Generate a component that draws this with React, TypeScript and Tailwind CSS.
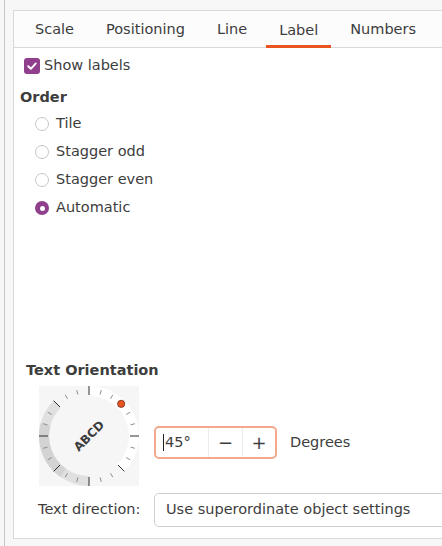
import React from "react";

function Dial() {
  const cx = 50;
  const cy = 50;
  const pt = (deg: number, r: number) => {
    const a = (deg * Math.PI) / 180;
    return [cx + r * Math.cos(a), cy - r * Math.sin(a)];
  };
  const arc = (from: number, to: number, r: number) => {
    const [x1, y1] = pt(from, r);
    const [x2, y2] = pt(to, r);
    const large = to - from > 180 ? 1 : 0;
    return `M ${x1} ${y1} A ${r} ${r} 0 ${large} 0 ${x2} ${y2}`;
  };
  const ticks = [];
  for (let a = 0; a < 360; a += 15) {
    if (a === 45) continue;
    const major = a % 45 === 0;
    const [x1, y1] = pt(a, major ? 41 : 43);
    const [x2, y2] = pt(a, major ? 50 : 47.5);
    ticks.push(
      <line
        key={a}
        x1={x1}
        y1={y1}
        x2={x2}
        y2={y2}
        stroke={major ? "#2e2e2e" : "#8c8c8c"}
        strokeWidth={1}
      />
    );
  }
  const [dx, dy] = pt(45, 45.5);
  return (
    <svg width="100" height="100" viewBox="0 0 100 100" className="block">
      <rect x="0" y="0" width="100" height="100" fill="#f6f6f6" />
      <path d={arc(135, 270, 45)} stroke="#e0e0e0" strokeWidth="10" fill="none" />
      <path d={arc(165, 235, 45)} stroke="#d3d3d3" strokeWidth="10" fill="none" />
      <path d={arc(-45, 90, 45)} stroke="#ffffff" strokeWidth="10" fill="none" />
      {ticks}
      <circle cx={dx} cy={dy} r="3.6" fill="#e95420" stroke="#6a2a14" strokeWidth="0.8" />
      <text
        x={cx}
        y={cy}
        transform={`rotate(-45 ${cx} ${cy})`}
        textAnchor="middle"
        dominantBaseline="central"
        fontSize="12"
        fontWeight="bold"
        fill="#3d3d3d"
        fontFamily="'DejaVu Sans', sans-serif"
      >
        ABCD
      </text>
    </svg>
  );
}

function Radio({ label, checked }: { label: string; checked?: boolean }) {
  return (
    <div className="flex h-[28px] items-center">
      {checked ? (
        <span className="flex h-[14px] w-[14px] items-center justify-center rounded-full bg-[#8f3f8c]">
          <span className="h-[5px] w-[5px] rounded-full bg-white" />
        </span>
      ) : (
        <span className="h-[14px] w-[14px] rounded-full border border-[#c6c6c6] bg-white" />
      )}
      <span className="ml-[7px]">{label}</span>
    </div>
  );
}

export default function App() {
  const tabs = ["Scale", "Positioning", "Line", "Label", "Numbers"];
  return (
    <div
      className="flex h-[546px] w-[442px] overflow-hidden bg-[#f7f7f7] text-[14.5px] text-[#3d3d3d]"
      style={{ fontFamily: "'DejaVu Sans', 'Liberation Sans', sans-serif" }}
    >
      <div className="w-[4px] shrink-0" />
      <div className="h-full w-px shrink-0 bg-[#cbc5bf]" />
      <div className="ml-[8px] mt-[10px] flex h-[529px] w-[460px] shrink-0 flex-col border border-r-0 border-[#d9d9d9] bg-white">
        <div className="flex h-[37px] shrink-0 items-stretch gap-[6px] border-b border-[#d9d9d9] bg-[#fcfcfc] pl-[8px]">
          {tabs.map((t) => (
            <div
              key={t}
              className={
                t === "Label"
                  ? "-mb-px flex items-center border-b-[3px] border-[#e95420] px-[13px] pt-[5px]"
                  : "flex items-center px-[13px] pt-[2px]"
              }
            >
              {t}
            </div>
          ))}
        </div>

        <div className="mt-[4px] flex h-[28px] items-center pl-[10px]">
          <span className="flex h-[16px] w-[16px] items-center justify-center rounded-[3px] bg-[#8f3f8c]">
            <svg width="12" height="12" viewBox="0 0 12 12">
              <path d="M2.2 6.2 L4.9 8.8 L9.8 3.4" stroke="white" strokeWidth="1.9" fill="none" strokeLinecap="round" strokeLinejoin="round" />
            </svg>
          </span>
          <span className="ml-[4px]">Show labels</span>
        </div>

        <div className="mt-[6px] flex h-[24px] items-center pl-[6px] font-bold">Order</div>
        <div className="flex flex-col pl-[21px]">
          <Radio label="Tile" />
          <Radio label="Stagger odd" />
          <Radio label="Stagger even" />
          <Radio label="Automatic" checked />
        </div>

        <div className="mt-auto flex flex-col pb-[11px] pl-[12px]">
          <div className="flex h-[20px] items-center font-bold">Text Orientation</div>
          <div className="mt-[5px] flex items-center pl-[13px]">
            <Dial />
            <div className="ml-[15px] mt-[13px] flex h-[33px] w-[123px] items-stretch rounded-[5px] border-2 border-[#f3a98c] bg-white">
              <div className="flex w-[52px] items-center pl-[7px]">
                <span className="mr-[1px] h-[17px] w-px bg-[#222]" />
                45°
              </div>
              <div className="flex w-[34px] items-center justify-center border-l border-[#ececec] text-[18px]">−</div>
              <div className="flex flex-1 items-center justify-center border-l border-[#ececec] text-[18px]">+</div>
            </div>
            <div className="ml-[13px] mt-[13px]">Degrees</div>
          </div>
          <div className="mt-[7px] flex items-center pl-[12px]">
            <div className="w-[116px]">Text direction:</div>
            <div className="flex h-[34px] flex-1 items-center rounded-[5px] border border-[#cfcfcf] bg-white pl-[11px]">
              Use superordinate object settings
            </div>
          </div>
        </div>
      </div>
    </div>
  );
}
